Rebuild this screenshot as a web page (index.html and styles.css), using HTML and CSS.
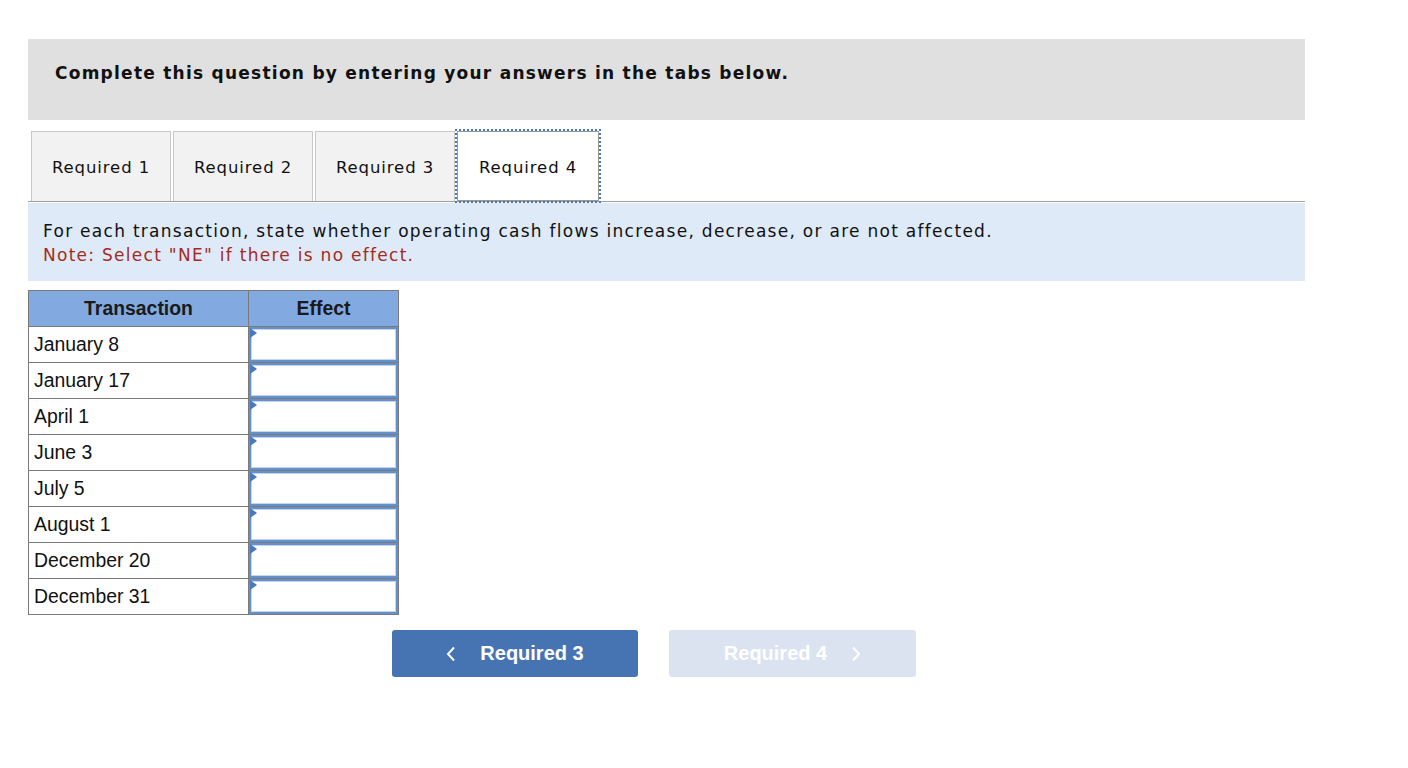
FILE: index.html
```html
<!DOCTYPE html>
<html>
<head>
<meta charset="utf-8">
<link rel="stylesheet" href="styles.css">
</head>
<body>
<div class="page">
  <div class="banner">Complete this question by entering your answers in the tabs below.</div>
  <div class="tabs">
    <div class="tab">Required 1</div>
    <div class="tab">Required 2</div>
    <div class="tab">Required 3</div>
    <div class="tab active">Required 4</div>
  </div>
  <div class="instructions">
    <div>For each transaction, state whether operating cash flows increase, decrease, or are not affected.</div>
    <div class="note">Note: Select "NE" if there is no effect.</div>
  </div>
  <table class="grid">
    <thead>
      <tr><th class="col-t">Transaction</th><th class="col-e">Effect</th></tr>
    </thead>
    <tbody>
      <tr><td>January 8</td><td class="cell-in"><div class="box"><span class="tri"></span></div></td></tr>
      <tr><td>January 17</td><td class="cell-in"><div class="box"><span class="tri"></span></div></td></tr>
      <tr><td>April 1</td><td class="cell-in"><div class="box"><span class="tri"></span></div></td></tr>
      <tr><td>June 3</td><td class="cell-in"><div class="box"><span class="tri"></span></div></td></tr>
      <tr><td>July 5</td><td class="cell-in"><div class="box"><span class="tri"></span></div></td></tr>
      <tr><td>August 1</td><td class="cell-in"><div class="box"><span class="tri"></span></div></td></tr>
      <tr><td>December 20</td><td class="cell-in"><div class="box"><span class="tri"></span></div></td></tr>
      <tr><td>December 31</td><td class="cell-in"><div class="box"><span class="tri"></span></div></td></tr>
    </tbody>
  </table>
  <div class="nav">
    <div class="btn prev"><svg class="chev" width="10" height="16" viewBox="0 0 10 16"><path d="M8 1.5 L2 8 L8 14.5" fill="none" stroke="#fff" stroke-width="2"/></svg><span>Required 3</span></div>
    <div class="btn next"><span>Required 4</span><svg class="chev" width="10" height="16" viewBox="0 0 10 16"><path d="M2 1.5 L8 8 L2 14.5" fill="none" stroke="#fff" stroke-width="2"/></svg></div>
  </div>
</div>
</body>
</html>
```

FILE: styles.css
```css
html, body {
  margin: 0;
  padding: 0;
  background: #fff;
}
.page {
  width: 1277px;
  margin-left: 28px;
  padding-top: 39px;
}
.banner {
  height: 81px;
  box-sizing: border-box;
  background: #e0e0e0;
  padding: 22px 0 0 27px;
  font-family: "DejaVu Sans", Verdana, sans-serif;
  font-weight: bold;
  font-size: 17px;
  letter-spacing: 1.25px;
  line-height: 24px;
  color: #111;
}
.tabs {
  display: flex;
  gap: 2px;
  margin-top: 11px;
  padding-left: 3px;
  border-bottom: 1px solid #a0a0a0;
  height: 70px;
}
.tab {
  width: 140px;
  height: 70px;
  box-sizing: border-box;
  background: #f2f2f2;
  border: 1px solid #c8c8c8;
  border-bottom: none;
  display: flex;
  align-items: center;
  justify-content: center;
  font-family: "DejaVu Sans", Verdana, sans-serif;
  font-size: 16.5px;
  letter-spacing: 0.9px;
  color: #111;
  padding-top: 2px;
}
.tab.active {
  background: #fff;
  width: 142px;
  border: 1px solid #999;
  outline: 2px dotted #4a78bd;
  outline-offset: 0px;
  position: relative;
  z-index: 1;
}
.instructions {
  margin-top: 1px;
  height: 78px;
  box-sizing: border-box;
  background: #deeaf7;
  padding: 16px 0 0 15px;
  font-family: "DejaVu Sans", Verdana, sans-serif;
  font-size: 17px;
  letter-spacing: 1.28px;
  line-height: 24px;
  color: #111;
}
.note {
  color: #a52a24;
}
.grid {
  margin-top: 9px;
  border-collapse: collapse;
  font-family: "Liberation Sans", Arial, sans-serif;
  font-size: 19.4px;
  color: #111;
}
.grid th, .grid td {
  border: 1px solid #7a7a7a;
  height: 35px;
  padding: 0;
  box-sizing: border-box;
}
.grid th {
  background: #82aae0;
  font-weight: bold;
  text-align: center;
  color: #1a1a1a;
  height: 36px;
}
.col-t { width: 220px; }
.col-e { width: 150px; }
.grid td {
  padding-left: 5px;
  text-align: left;
}
.grid td.cell-in {
  padding: 0;
}
.box {
  height: 35px;
  box-sizing: border-box;
  border: 2px solid #6690cc;
  box-shadow: inset 0 0 0 1px #c3d6f0;
  position: relative;
  background: #fff;
}
.tri {
  position: absolute;
  left: -1px;
  top: -1px;
  width: 0;
  height: 0;
  border-top: 5px solid transparent;
  border-bottom: 5px solid transparent;
  border-left: 7px solid #4a78c0;
}
.nav {
  display: flex;
  gap: 31px;
  margin-top: 15px;
  padding-left: 364px;
}
.btn {
  width: 246px;
  height: 47px;
  border-radius: 3px;
  display: flex;
  align-items: center;
  justify-content: center;
  font-family: "Liberation Sans", Arial, sans-serif;
  font-weight: bold;
  font-size: 20px;
  color: #fff;
}
.prev {
  background: #4674b3;
}
.prev .chev { margin-right: 24px; }
.next {
  width: 247px;
  background: #dae3ef;
}
.next .chev { margin-left: 24px; }
```
